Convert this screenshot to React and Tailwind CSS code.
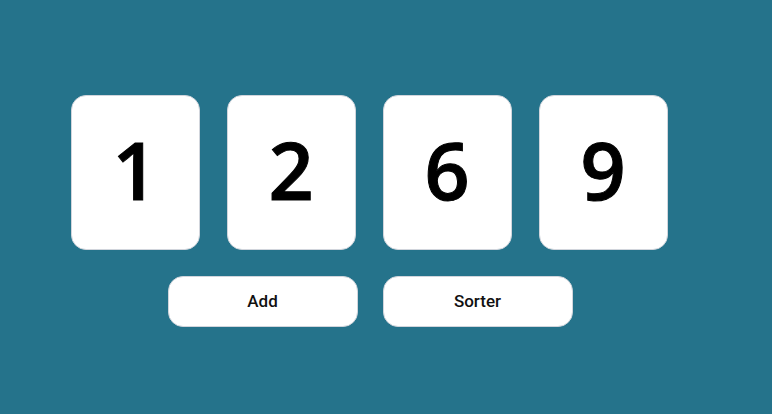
import { useState } from 'react';

const initial = [1, 2, 6, 9];

function Card({ value }) {
  return (
    <div className="flex h-[155px] w-[129px] items-center justify-center rounded-[15px] border border-gray-300 bg-white pb-[7px]">
      <span
        className="text-[79px] font-semibold leading-none text-black [-webkit-text-stroke:1px_black]"
        style={{ fontFamily: '"Open Sans", "Noto Sans", sans-serif' }}
      >
        {value}
      </span>
    </div>
  );
}

export default function App() {
  const [numbers, setNumbers] = useState(initial);

  const add = () => setNumbers(n => [...n, Math.floor(Math.random() * 10)]);
  const sort = () => setNumbers(n => [...n].sort((a, b) => a - b));

  return (
    <div
      className="flex h-[414px] w-full flex-col items-center bg-[#25738b] pt-[95px] pr-[34px]"
      style={{ fontFamily: 'Roboto, "Liberation Sans", sans-serif' }}
    >
      <div className="flex gap-[27px]">
        {numbers.map((n, i) => (
          <Card key={i} value={n} />
        ))}
      </div>
      <div className="mt-[26px] flex gap-[25px] pl-[2px]">
        <button
          onClick={add}
          className="h-[51px] w-[190px] rounded-[15px] border border-gray-300 bg-white text-[17px] font-medium text-[#111]"
        >
          Add
        </button>
        <button
          onClick={sort}
          className="h-[51px] w-[190px] rounded-[15px] border border-gray-300 bg-white text-[17px] font-medium text-[#111]"
        >
          Sorter
        </button>
      </div>
    </div>
  );
}
